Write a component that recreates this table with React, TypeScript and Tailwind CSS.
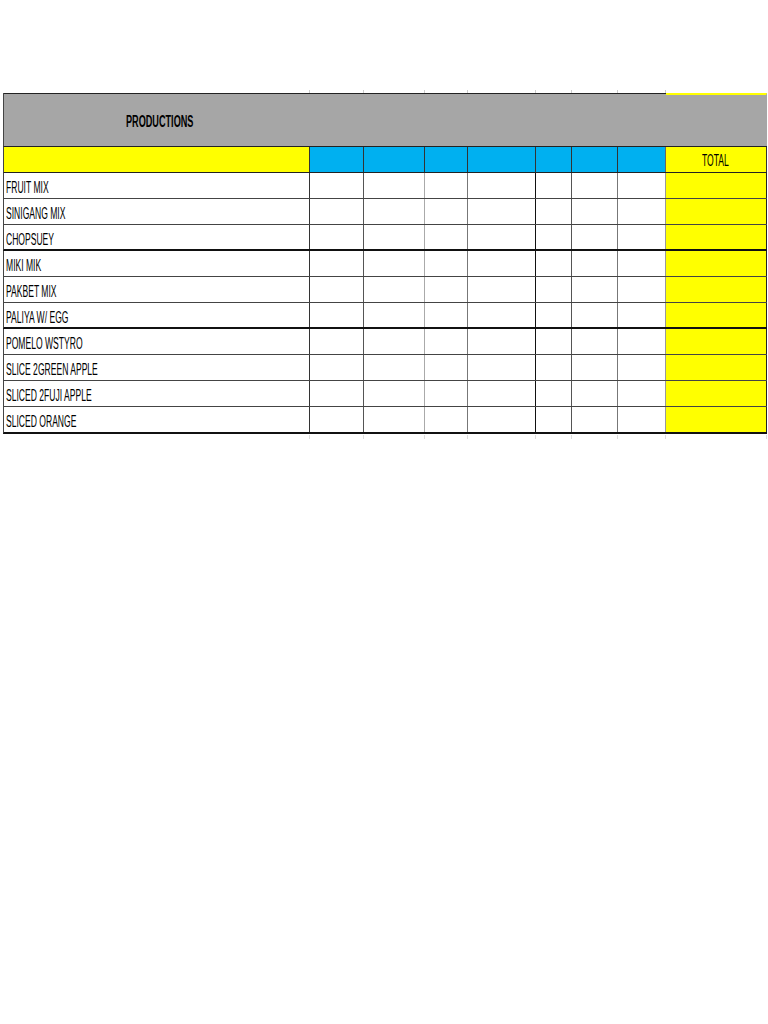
import React from "react";

const cols = "grid-cols-[306px_54px_61px_43px_68px_36px_46px_48px_101px]";

const items = [
  "FRUIT MIX",
  "SINIGANG MIX",
  "CHOPSUEY",
  "MIKI MIK",
  "PAKBET MIX",
  "PALIYA W/ EGG",
  "POMELO WSTYRO",
  "SLICE 2GREEN APPLE",
  "SLICED 2FUJI APPLE",
  "SLICED ORANGE",
];

const vlines = [
  "border-r-[#333]",
  "border-r-[#555]",
  "border-r-[#aaa]",
  "border-r-[#777]",
  "border-r-[#111]",
  "border-r-[#555]",
  "border-r-[#777]",
  "border-r-[#999]",
  "border-r-[#222]",
];

function Label({ children, bold }: { children: React.ReactNode; bold?: boolean }) {
  return (
    <span
      className={`inline-block origin-left ${bold ? "scale-x-[0.57] font-bold" : "scale-x-[0.535]"} whitespace-nowrap text-[16px] leading-none text-black`}
      style={{ fontFamily: '"Liberation Sans", Arial, sans-serif' }}
    >
      {children}
    </span>
  );
}

export default function App() {
  return (
    <div className="min-h-[1024px] w-[768px] bg-white pt-[93px] pl-[3px]">
      <div className="w-[764px]">
        {/* ticks above */}
        <div className={`grid ${cols} h-0`}>
          {vlines.map((_, i) => (
            <div key={i} className="relative">
              {i < 8 && <div className="absolute right-[-1px] top-[-3px] h-[3px] w-[1px] bg-[#ccc]" />}
            </div>
          ))}
        </div>
        {/* gray title band */}
        <div className={`grid ${cols} h-[53px] border-l border-l-[#444] bg-[#a6a6a6]`}>
          <div className="col-span-8 flex items-center border-t border-t-[#222] pl-[122px] pt-[3px]">
            <Label bold>PRODUCTIONS</Label>
          </div>
          <div className="border-t-2 border-t-[#ffff00] border-r border-r-[#a6a6a6]" />
        </div>
        {/* header row */}
        <div className={`grid ${cols} h-[27px] border-l border-l-[#444] border-t border-t-[#222] border-b border-b-[#222]`}>
          <div className="border-r border-r-[#333] bg-[#ffff00]" />
          <div className="border-r border-r-[#333] bg-[#00b0f0]" />
          <div className="border-r border-r-[#333] bg-[#00b0f0]" />
          <div className="border-r border-r-[#333] bg-[#00b0f0]" />
          <div className="border-r border-r-[#333] bg-[#00b0f0]" />
          <div className="border-r border-r-[#333] bg-[#00b0f0]" />
          <div className="border-r border-r-[#333] bg-[#00b0f0]" />
          <div className="border-r border-r-[#666] bg-[#00b0f0]" />
          <div className="flex items-center justify-center border-r border-r-[#333] bg-[#ffff00] pl-[22px] pt-[1px]">
            <div className="w-[50px]">
              <Label>TOTAL</Label>
            </div>
          </div>
        </div>
        {/* body rows */}
        {items.map((name, r) => {
          const thick = r === 2 || r === 5 || r === 9;
          return (
            <div
              key={name}
              className={`grid ${cols} ${r === 9 ? "h-[27px]" : "h-[26px]"} ${thick ? "border-b-2 border-b-[#111]" : "border-b border-b-[#444]"} border-l border-l-[#444]`}
            >
              {vlines.map((v, c) => (
                <div
                  key={c}
                  className={`border-r ${v} ${c === 8 ? "bg-[#ffff00]" : "bg-white"} ${c === 0 ? "flex items-center pl-[2px] pt-[5px]" : ""}`}
                >
                  {c === 0 && <Label>{name}</Label>}
                </div>
              ))}
            </div>
          );
        })}
        {/* ticks below */}
        <div className={`grid ${cols} h-[6px]`}>
          {vlines.map((_, i) => (
            <div key={i} className="relative">
              <div className="absolute right-[-1px] top-[1px] h-[4px] w-[1px] bg-[#ddd]" />
            </div>
          ))}
        </div>
      </div>
    </div>
  );
}
